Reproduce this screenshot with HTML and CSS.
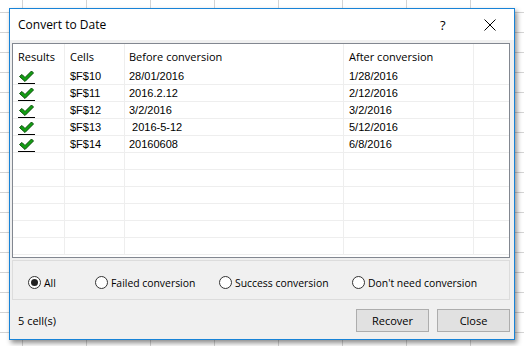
FILE: index.html
```html
<!DOCTYPE html>
<html lang="en">
<head>
  <meta charset="UTF-8" />
  <title>Convert to Date</title>
  <link rel="stylesheet" href="styles.css">
</head>
<body>
  <div class="dialog">
    <div class="titlebar">
      <span class="title">Convert to Date</span>
      <span class="help">?</span>
      <svg class="close-x" width="12" height="12" viewBox="0 0 12 12">
        <path d="M0.5 0.5 L11.5 11.5 M11.5 0.5 L0.5 11.5" stroke="#000" stroke-width="1" fill="none" />
      </svg>
    </div>

    <div class="content">
      <div class="listbox">
        <div class="row head">
          <div class="cell c1">Results</div>
          <div class="cell c2">Cells</div>
          <div class="cell c3">Before conversion</div>
          <div class="cell c4">After conversion</div>
          <div class="cell c5"></div>
        </div>
        <div id="rows"></div>
      </div>

      <div class="groupbox">
        <label class="radio"><span class="dot on"></span>All</label>
        <label class="radio"><span class="dot"></span>Failed conversion</label>
        <label class="radio"><span class="dot"></span>Success conversion</label>
        <label class="radio"><span class="dot"></span>Don't need conversion</label>
      </div>

      <div class="footer">
        <span class="count">5 cell(s)</span>
        <div class="buttons">
          <button>Recover</button>
          <button>Close</button>
        </div>
      </div>
    </div>
  </div>

  <script>
    const results = [
      ["$F$10", "28/01/2016", "1/28/2016"],
      ["$F$11", "2016.2.12", "2/12/2016"],
      ["$F$12", "3/2/2016", "3/2/2016"],
      ["$F$13", "\u00a02016-5-12", "5/12/2016"],
      ["$F$14", "20160608", "6/8/2016"]
    ];

    const check = `<svg class="check" width="17" height="14" viewBox="0 0 17 14">
      <path d="M1.5 6.5 L4 4.5 L7 7.5 L13.5 1 L15.5 3 L7 11.5 Z" fill="#12a012" stroke="#0b4d0b" stroke-width="1" stroke-linejoin="round" />
      <path d="M0 13.5 H17" stroke="#000" stroke-width="1" />
    </svg>`;

    let html = results.map(r => `<div class="row">
        <div class="cell c1">${check}</div>
        <div class="cell c2">${r[0]}</div>
        <div class="cell c3">${r[1]}</div>
        <div class="cell c4">${r[2]}</div>
        <div class="cell c5"></div>
      </div>`).join('');

    for (let i = 0; i < 6; i++) {
      html += `<div class="row"><div class="cell c1"></div><div class="cell c2"></div><div class="cell c3"></div><div class="cell c4"></div><div class="cell c5"></div></div>`;
    }

    document.getElementById('rows').innerHTML = html;
  </script>
</body>
</html>
```

FILE: styles.css
```css
body {
  margin: 0;
  padding: 8px 0 0 9px;
  height: 346px;
  box-sizing: border-box;
  overflow: hidden;
  background-color: #fff;
  background-image:
    linear-gradient(to right, #d4d4d4 1px, transparent 1px),
    linear-gradient(to bottom, #d4d4d4 1px, transparent 1px);
  background-size: 64px 20px;
  background-position: 22px 12px;
  font-family: 'Open Sans', sans-serif;
  color: #000;
}

.dialog {
  width: 506px;
  height: 332px;
  box-sizing: border-box;
  border: 1px solid #1883d7;
  background: #f0f0f0;
  box-shadow: 2px 3px 5px rgba(0, 0, 0, 0.45);
  display: flex;
  flex-direction: column;
}

.titlebar {
  height: 31px;
  background: #fff;
  display: flex;
  align-items: center;
  padding: 0 0 0 8px;
}

.title {
  font-size: 12px;
  flex: 1;
  color: #000;
}

.help {
  font-size: 13px;
  width: 12px;
  margin-right: 32px;
}

.close-x {
  margin-right: 18px;
}

.content {
  flex: 1;
  padding: 3px 4px 0 2px;
  display: flex;
  flex-direction: column;
}

.listbox {
  height: 215px;
  box-sizing: border-box;
  border: 1px solid #828790;
  background: #fff;
  overflow: hidden;
}

.row {
  display: flex;
  height: 17px;
  box-sizing: border-box;
  border-bottom: 1px solid #eeeeee;
  font-family: 'Liberation Sans', sans-serif;
  font-size: 11px;
}

.row.head {
  height: 24px;
  border-bottom: none;
  font-family: 'Open Sans', sans-serif;
  font-size: 11px;
}

.cell {
  box-sizing: border-box;
  border-right: 1px solid #eeeeee;
  padding-left: 5px;
  display: flex;
  align-items: center;
  white-space: pre;
}

.c1 { width: 52px; }
.c2 { width: 60px; }
.c3 { width: 219px; padding-left: 4px; }
.c4 { width: 130px; }
.c5 { flex: 1; border-right: none; }

.head .cell {
  padding-top: 1px;
}

.check {
  display: block;
  margin-top: 2px;
}

.groupbox {
  margin-top: 2px;
  height: 40px;
  box-sizing: border-box;
  border: 1px solid #dcdcdc;
  display: flex;
  align-items: center;
  padding: 5px 0 0 15px;
  font-size: 10.4px;
}

.radio {
  display: flex;
  align-items: center;
  gap: 3px;
}

.radio:nth-child(1) { width: 67px; }
.radio:nth-child(2) { width: 124px; }
.radio:nth-child(3) { width: 133px; }

.dot {
  width: 13px;
  height: 13px;
  box-sizing: border-box;
  border: 1px solid #333;
  border-radius: 50%;
  background: #fff;
  display: flex;
  align-items: center;
  justify-content: center;
}

.dot.on::after {
  content: "";
  width: 7px;
  height: 7px;
  border-radius: 50%;
  background: #222;
}

.footer {
  flex: 1;
  display: flex;
  align-items: center;
  justify-content: space-between;
  padding: 2px 0 0 6px;
  font-size: 11px;
}

.buttons {
  display: flex;
  gap: 8px;
}

button {
  width: 73px;
  height: 23px;
  box-sizing: border-box;
  background: #e1e1e1;
  border: 1px solid #adadad;
  font-family: 'Open Sans', sans-serif;
  font-size: 11px;
  color: #000;
  padding: 0;
}
```
